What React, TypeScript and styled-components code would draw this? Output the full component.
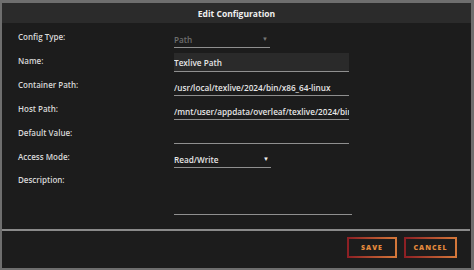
import React from 'react';
import styled, { createGlobalStyle } from 'styled-components';

const GlobalStyle = createGlobalStyle`
  html, body {
    margin: 0;
    padding: 0;
    background: #1c1c1c;
  }
  * { box-sizing: border-box; }
`;

const Frame = styled.div`
  width: 474px;
  height: 270px;
  border: 2px solid #6e6e6e;
  border-right-width: 3px;
  border-top-width: 3px;
  background: #1c1c1c;
  display: flex;
  flex-direction: column;
  font-family: "Open Sans", "Noto Sans", sans-serif;
`;

const Header = styled.div`
  height: 20px;
  background: #2b2b2b;
  display: flex;
  align-items: center;
  justify-content: center;
  color: #f0f0f0;
  font-size: 8.5px;
  font-weight: 700;
`;

const Body = styled.div`
  flex: 1;
  padding: 1px 0 0 16px;
  display: flex;
  flex-direction: column;
`;

const Row = styled.div<{ tall?: boolean }>`
  display: grid;
  grid-template-columns: 156px auto;
  height: ${(p) => (p.tall ? '47px' : '24px')};
  align-items: ${(p) => (p.tall ? 'start' : 'center')};
`;

const Label = styled.div<{ top?: boolean }>`
  color: #d8d8d8;
  font-size: 8px;
  font-weight: 600;
  padding-top: ${(p) => (p.top ? '6px' : '0')};
`;

const Field = styled.div<{ w: number; filled?: boolean; h?: number; muted?: boolean }>`
  align-self: end;
  width: ${(p) => p.w}px;
  height: ${(p) => p.h || 17}px;
  background: ${(p) => (p.filled ? '#2a2a2a' : 'transparent')};
  border-bottom: 1px solid #8f8f8f;
  display: flex;
  align-items: center;
  justify-content: space-between;
  padding: 0 2px 0 0;
  color: ${(p) => (p.muted ? '#6e6e6e' : '#e6e6e6')};
  font-size: 8.2px;
  font-weight: 600;
  white-space: nowrap;
  overflow: hidden;
`;

const Arrow = styled.span<{ muted?: boolean }>`
  font-size: 6px;
  color: ${(p) => (p.muted ? '#777' : '#f0f0f0')};
`;

const Separator = styled.div`
  margin-top: 14px;
  height: 2px;
  background: #8a8a8a;
  margin-right: 1px;
`;

const Footer = styled.div`
  flex: 1;
  display: flex;
  justify-content: flex-end;
  align-items: flex-start;
  gap: 7px;
  padding: 6px 14px 0 0;
`;

const Button = styled.button<{ w: number }>`
  width: ${(p) => p.w}px;
  height: 21px;
  background: transparent;
  border: 2px solid #b0402a;
  border-image: linear-gradient(90deg, #8c1f24, #d5783a) 1;
  color: #e48a3c;
  font-family: "Open Sans", "Noto Sans", sans-serif;
  font-size: 7px;
  font-weight: 800;
  letter-spacing: 1px;
  padding: 0;
`;

export default function App() {
  return (
    <>
      <GlobalStyle />
      <Frame>
        <Header>Edit Configuration</Header>
        <Body>
          <Row>
            <Label>Config Type:</Label>
            <Field w={96} muted>
              Path<Arrow muted>▼</Arrow>
            </Field>
          </Row>
          <Row>
            <Label>Name:</Label>
            <Field w={175} h={19} filled>Texlive Path</Field>
          </Row>
          <Row>
            <Label>Container Path:</Label>
            <Field w={175}>/usr/local/texlive/2024/bin/x86_64-linux</Field>
          </Row>
          <Row>
            <Label>Host Path:</Label>
            <Field w={175}>/mnt/user/appdata/overleaf/texlive/2024/bin/x86_64-linux</Field>
          </Row>
          <Row>
            <Label>Default Value:</Label>
            <Field w={175}></Field>
          </Row>
          <Row>
            <Label>Access Mode:</Label>
            <Field w={97}>
              Read/Write<Arrow>▼</Arrow>
            </Field>
          </Row>
          <Row tall>
            <Label top>Description:</Label>
            <Field w={178} h={46}></Field>
          </Row>
        </Body>
        <Separator />
        <Footer>
          <Button w={50}>SAVE</Button>
          <Button w={53}>CANCEL</Button>
        </Footer>
      </Frame>
    </>
  );
}
